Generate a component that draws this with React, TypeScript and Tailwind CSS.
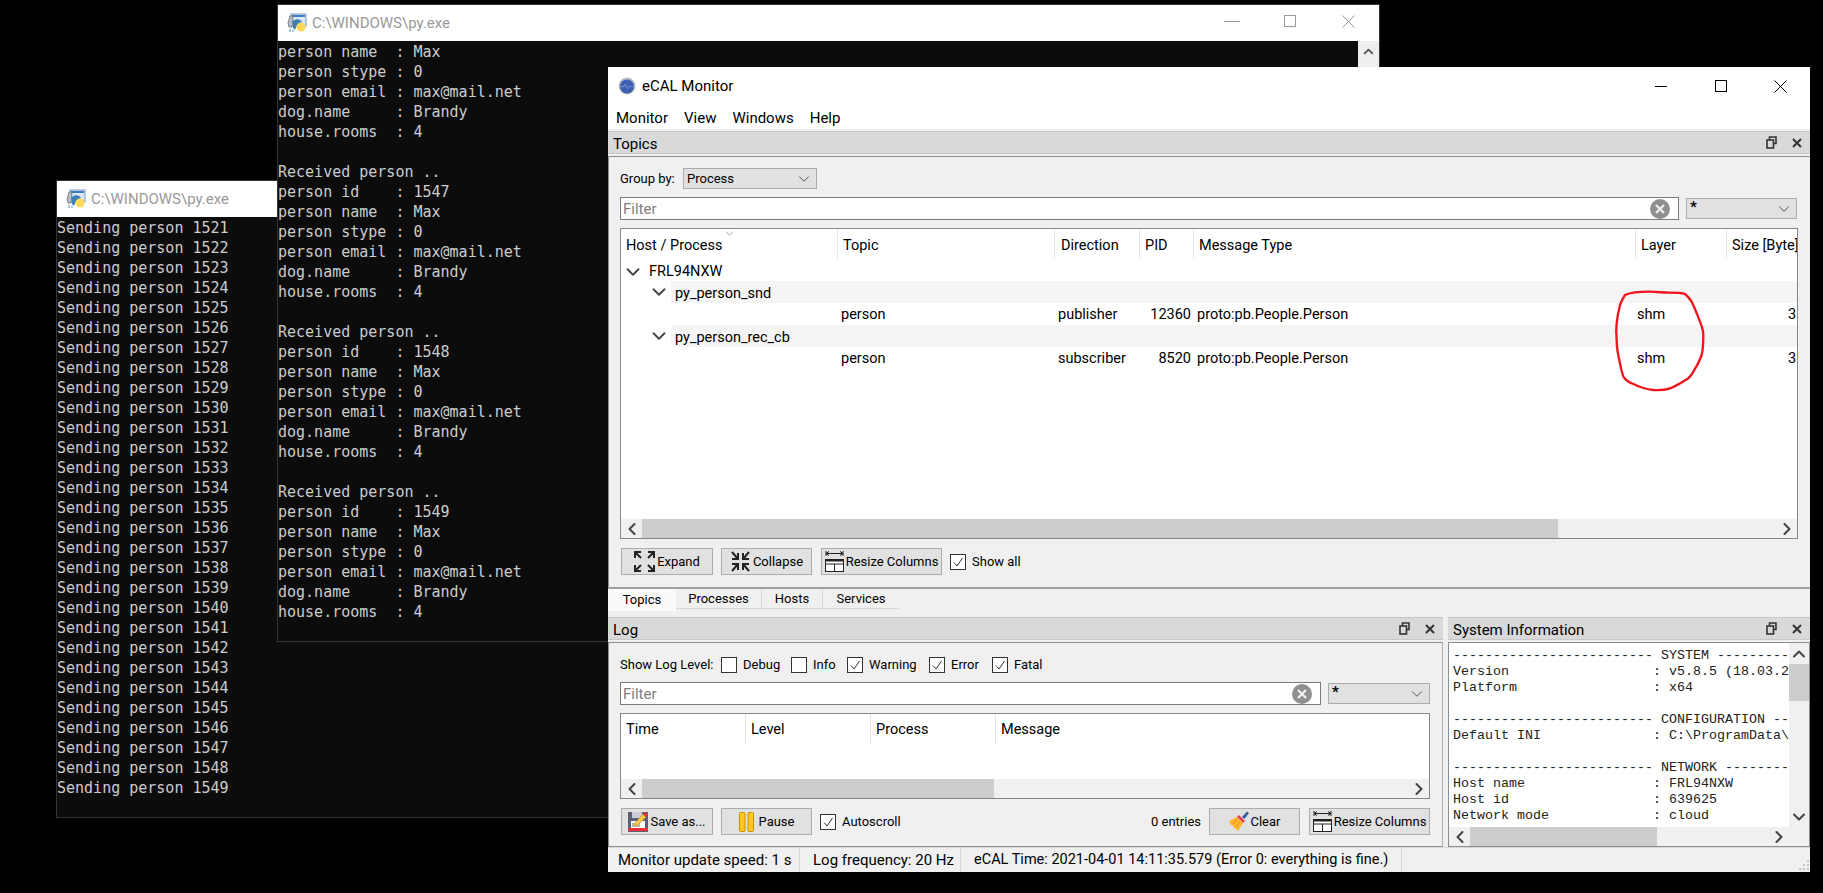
import { ChevronDown, ChevronLeft, ChevronRight, ChevronUp } from "lucide-react";
import type { ReactNode } from "react";

const received = (id: number) => [
    "Received person ..",
    `person id    : ${id}`,
    "person name  : Max",
    "person stype : 0",
    "person email : max@mail.net",
    "dog.name     : Brandy",
    "house.rooms  : 4",
    "",
];

const receiverLines = [...received(0).slice(2), ...received(1547), ...received(1548), ...received(1549).slice(0, 7)];
const senderLines = Array.from({ length: 29 }, (_, i) => `Sending person ${1521 + i}`);

const sysInfo = [
    "------------------------- SYSTEM ------------------",
    "Version                  : v5.8.5 (18.03.2021)",
    "Platform                 : x64",
    "",
    "------------------------- CONFIGURATION ------------",
    "Default INI              : C:\\ProgramData\\eCAL\\ecal.ini",
    "",
    "------------------------- NETWORK -----------------",
    "Host name                : FRL94NXW",
    "Host id                  : 639625",
    "Network mode             : cloud",
];

const PyIcon = () => (
    <svg width="20" height="20" viewBox="0 0 20 20" className="shrink-0">
        <rect x="4" y="1" width="15" height="12" fill="#dbe6f2" stroke="#7b98b8" />
        <rect x="5" y="2" width="13" height="2" fill="#3d7fc4" />
        <path d="M1 10 L3 3 L6 3 L5 14 L2 14 Z" fill="#b9c0c8" stroke="#5f6b78" strokeWidth="0.8" />
        <path d="M6 8 C9 5 14 6 15 9 L10 12 L8 17 L6 15 Z" fill="#3e7fb8" />
        <circle cx="14" cy="14" r="4.5" fill="#ffd95a" />
        <path d="M3 16 V19 M6 17 V19" stroke="#4a90d0" strokeWidth="1" />
    </svg>
);

const EcalIcon = () => (
    <svg width="18" height="18" viewBox="0 0 18 18" className="shrink-0">
        <circle cx="9" cy="9" r="8.5" fill="#b9bcc8" />
        <circle cx="9" cy="9.5" r="7" fill="#3d5fb0" />
        <path d="M2 9.5 H6 L7.5 7 L9.5 12 L11 9.5 H16" stroke="#7f9bdc" strokeWidth="0.8" fill="none" />
    </svg>
);

const DockButtons = () => (
    <div className="flex items-center gap-[15px] pr-[8px]">
        <svg width="11" height="13" viewBox="0 0 11 13">
            <path d="M3.5 3.5 V1 H10 V7.5 H7.5" fill="none" stroke="#333" strokeWidth="1.6" />
            <rect x="1" y="4" width="6.5" height="8" fill="none" stroke="#333" strokeWidth="1.6" />
        </svg>
        <svg width="10" height="10" viewBox="0 0 10 10">
            <path d="M1 1 L9 9 M9 1 L1 9" stroke="#333" strokeWidth="2" />
        </svg>
    </div>
);

const DockHeader = ({ title }: { title: string }) => (
    <div className="h-[23px] bg-[#d9d9d9] border-y border-[#c8c8c8] flex items-center justify-between pl-[5px] shrink-0 text-[15px]">
        <span className="pt-[2px]">{title}</span>
        <DockButtons />
    </div>
);

const Check = ({ on, label, className }: { on?: boolean; label: string; className?: string }) => (
    <div className={`flex items-center gap-[6px] text-[13px] ${className ?? ""}`}>
        <div className="w-[16px] h-[16px] border border-[#333] bg-white flex items-center justify-center shrink-0">
            {on && (
                <svg width="12" height="12" viewBox="0 0 12 12">
                    <path d="M2 6.5 L5 10 L10.5 2" fill="none" stroke="#333" strokeWidth="1" />
                </svg>
            )}
        </div>
        <span className="whitespace-nowrap">{label}</span>
    </div>
);

const Btn = ({ icon, label, className }: { icon: ReactNode; label: string; className: string }) => (
    <button className={`h-[27px] bg-[#e1e1e1] border border-[#adadad] flex items-center justify-center gap-[2px] text-[13px] whitespace-nowrap shrink-0 ${className}`}>
        {icon}
        <span>{label}</span>
    </button>
);

const ExpandIcon = () => (
    <svg width="21" height="21" viewBox="0 0 21 21" className="shrink-0">
        <path d="M1 7 V1 H7 M1 1 L7 7 M14 1 H20 V7 M20 1 L14 7 M1 14 V20 H7 M1 20 L7 14 M14 20 H20 V14 M20 20 L14 14" fill="none" stroke="#222" strokeWidth="2" />
    </svg>
);

const CollapseIcon = () => (
    <svg width="21" height="21" viewBox="0 0 21 21" className="shrink-0">
        <path d="M2 1 L8 8 M8 2 V8 H2 M19 1 L13 8 M13 2 V8 H19 M2 20 L8 13 M8 19 V13 H2 M19 20 L13 13 M13 19 V13 H19" fill="none" stroke="#222" strokeWidth="2" />
    </svg>
);

const ResizeIcon = () => (
    <svg width="19" height="21" viewBox="0 0 19 21" className="shrink-0">
        <path d="M1 0 V5 M18 0 V5 M1 2.5 H18 M1 2.5 L4 0.5 M1 2.5 L4 4.5 M18 2.5 L15 0.5 M18 2.5 L15 4.5" fill="none" stroke="#222" strokeWidth="1" />
        <rect x="0.5" y="8.5" width="18" height="12" fill="#fff" stroke="#222" />
        <path d="M0.5 13 H18.5 M9.5 13 V20.5" stroke="#222" />
        <rect x="0.5" y="8.5" width="18" height="2" fill="#222" />
    </svg>
);

const SaveIcon = () => (
    <svg width="20" height="21" viewBox="0 0 20 21" className="shrink-0">
        <rect x="0" y="1" width="20" height="20" fill="#5a5f75" />
        <rect x="4" y="1" width="10" height="6" fill="#c9ccd6" />
        <rect x="3" y="10" width="14" height="9" fill="#fff" />
        <rect x="0" y="17" width="20" height="3" fill="#e8303a" />
        <path d="M4 13 H12 M4 15 H12" stroke="#777" />
        <path d="M7 12 L15 3 L18 6 L10 14 L6 15 Z" fill="#f7c843" stroke="#b8860b" strokeWidth="0.5" />
        <path d="M15 3 L17 1 L20 4 L18 6 Z" fill="#e8303a" />
    </svg>
);

const PauseIcon = () => (
    <svg width="15" height="20" viewBox="0 0 15 20" className="shrink-0">
        <rect x="0.5" y="0.5" width="5.5" height="19" rx="1" fill="#ffc81e" stroke="#c89000" />
        <rect x="9" y="0.5" width="5.5" height="19" rx="1" fill="#ffc81e" stroke="#c89000" />
    </svg>
);

const BroomIcon = () => (
    <svg width="20" height="21" viewBox="0 0 20 21" className="shrink-0">
        <path d="M13 6 L18 0.5 L20 2 L15.5 8 Z" fill="#2f5f9e" />
        <path d="M10 4 L16 10 L14 12 L8 6 Z" fill="#e5405a" />
        <path d="M8 6 L14 12 L9 20 L6 17 L6 18 L3 14 L2 14 L0 10 Z" fill="#fdb52e" />
        <path d="M8 8 L4 13 M11 11 L7 16" stroke="#f08a1a" />
    </svg>
);

const Scrollbar = ({ thumb }: { thumb: string }) => (
    <div className="h-[19px] bg-[#f0f0f0] flex shrink-0">
        <div className="w-[21px] flex items-center justify-center">
            <ChevronLeft size={20} strokeWidth={2.5} color="#444" className="shrink-0" />
        </div>
        <div className={`bg-[#cdcdcd] ${thumb}`} />
        <div className="flex-1" />
        <div className="w-[21px] flex items-center justify-center">
            <ChevronRight size={20} strokeWidth={2.5} color="#444" className="shrink-0" />
        </div>
    </div>
);

const ClearIcon = () => (
    <div className="w-[20px] h-[20px] rounded-full bg-[#8f8f8f] flex items-center justify-center shrink-0">
        <svg width="10" height="10" viewBox="0 0 10 10">
            <path d="M1 1 L9 9 M9 1 L1 9" stroke="#eee" strokeWidth="2.4" />
        </svg>
    </div>
);

const FilterRow = ({ filter, combo }: { filter: string; combo: string }) => (
    <div className="flex items-center gap-[7px] text-[15px]">
        <div className={`h-[23px] bg-white border border-[#7a7a7a] flex items-center justify-between pl-[2px] pr-[8px] text-[#808080] ${filter}`}>
            <span>Filter</span>
            <ClearIcon />
        </div>
        <div className={`h-[21px] bg-[#e1e1e1] border border-[#adadad] flex justify-between pl-[3px] pr-[3px] ${combo}`}>
            <span className="font-bold leading-[16px]">*</span>
            <ChevronDown size={18} strokeWidth={1} color="#222" className="self-center shrink-0" />
        </div>
    </div>
);

const Expander = () => (
    <div className="w-[15px] h-[15px] flex items-center justify-center shrink-0">
        <ChevronDown size={22} strokeWidth={2} color="#444" className="shrink-0" />
    </div>
);

const topicRows = [
    { topic: "person", direction: "publisher", pid: "12360" },
    { topic: "person", direction: "subscriber", pid: "8520" },
];

const Console = ({ className, lines }: { className: string; lines: string[] }) => (
    <div className={`absolute bg-[#0c0c0c] border border-[#333] flex flex-col ${className}`}>
        <div className="h-[36px] bg-white flex items-center gap-[5px] pl-[9px] shrink-0 text-[#999999] text-[15px]">
            <PyIcon />
            <span>C:\WINDOWS\py.exe</span>
        </div>
        <div className="pt-[1px] text-[#cccccc] text-[15px] leading-[20px] whitespace-pre font-['DejaVu_Sans_Mono',monospace]">
            {lines.map((line, i) => (
                <div key={i} className="h-[20px]">{line}</div>
            ))}
        </div>
    </div>
);

export default function App() {
    return (
        <div className="relative w-full h-screen bg-black overflow-hidden text-black text-[14.5px] leading-[20px] font-['Roboto',sans-serif]">
            <Console className="left-[56px] top-[180px] w-[600px] h-[638px]" lines={senderLines} />

            <Console className="left-[277px] top-[4px] w-[1103px] h-[638px]" lines={receiverLines} />
            <div className="absolute left-[1358px] top-[41px] w-[21px] h-[26px] bg-[#eeeeee] flex justify-center pt-[3px]">
                <ChevronUp size={15} strokeWidth={3} color="#555" />
            </div>
            <div className="absolute left-[1224px] top-[21px] w-[16px] h-[1px] bg-[#999]" />
            <div className="absolute left-[1284px] top-[15px] w-[12px] h-[12px] border border-[#999]" />
            <svg className="absolute left-[1342px] top-[15px]" width="13" height="13" viewBox="0 0 13 13">
                <path d="M0.5 0.5 L12.5 12.5 M12.5 0.5 L0.5 12.5" stroke="#999" />
            </svg>

            <div className="absolute left-[608px] top-[67px] w-[1202px] h-[805px] bg-[#f0f0f0] flex flex-col">
                <div className="h-[38px] bg-white flex items-center justify-between pl-[10px] shrink-0">
                    <div className="flex items-center gap-[6px] text-[15px]">
                        <EcalIcon />
                        <span>eCAL Monitor</span>
                    </div>
                    <div className="flex items-center">
                        <div className="w-[12px] h-[1px] bg-black mr-[48px]" />
                        <div className="w-[12px] h-[12px] border border-black mr-[47px]" />
                        <svg width="13" height="13" viewBox="0 0 13 13" className="mr-[23px]">
                            <path d="M0.5 0.5 L12.5 12.5 M12.5 0.5 L0.5 12.5" stroke="#000" />
                        </svg>
                    </div>
                </div>
                <div className="h-[24px] bg-white flex items-center gap-[16px] pl-[8px] pt-[2px] shrink-0 text-[15px]">
                    <span>Monitor</span>
                    <span>View</span>
                    <span>Windows</span>
                    <span>Help</span>
                </div>
                <div className="h-[2px] shrink-0" />

                <DockHeader title="Topics" />
                <div className="h-[2px] shrink-0" />
                <div className="flex-1 border-t border-l border-[#8a8f94] pl-[11px] pr-[12px] flex flex-col min-h-0">
                    <div className="flex items-center mt-[11px] h-[21px] text-[13px]">
                        <span className="w-[63px] shrink-0">Group by:</span>
                        <div className="w-[134px] h-[21px] bg-[#e1e1e1] border border-[#adadad] flex items-center justify-between pl-[3px] pr-[3px]">
                            <span>Process</span>
                            <ChevronDown size={18} strokeWidth={1} color="#222" className="shrink-0" />
                        </div>
                    </div>
                    <div className="mt-[8px]">
                        <FilterRow filter="w-[1059px]" combo="w-[111px]" />
                    </div>

                    <div className="relative mt-[8px] h-[311px] w-[1178px] bg-white border border-[#828790] flex flex-col overflow-hidden shrink-0">
                        <ChevronDown size={13} strokeWidth={1} color="#555" className="absolute left-[102px] top-[-2px]" />
                        <div className="h-[30px] flex shrink-0">
                            <div className="w-[217px] pl-[5px] pt-[7px] border-r border-[#e5e5e5] shrink-0">Host / Process</div>
                            <div className="w-[217px] pl-[5px] pt-[7px] border-r border-[#e5e5e5] shrink-0">Topic</div>
                            <div className="w-[85px] pl-[6px] pt-[7px] border-r border-[#e5e5e5] shrink-0">Direction</div>
                            <div className="w-[54px] pl-[5px] pt-[7px] border-r border-[#e5e5e5] shrink-0">PID</div>
                            <div className="w-[442px] pl-[5px] pt-[7px] border-r border-[#e5e5e5] shrink-0">Message Type</div>
                            <div className="w-[91px] pl-[5px] pt-[7px] border-r border-[#e5e5e5] shrink-0">Layer</div>
                            <div className="pl-[5px] pt-[7px] whitespace-nowrap">Size [Byte]</div>
                        </div>
                        <div className="flex-1 min-h-0">
                            <div className="h-[22px] flex items-center pl-[4px] gap-[9px] pt-[3px]">
                                <Expander />
                                <span>FRL94NXW</span>
                            </div>
                            {topicRows.map((row, i) => (
                                <div key={row.pid}>
                                    <div className="h-[22px] flex items-center pl-[30px]">
                                        <Expander />
                                        <div className="flex-1 h-full bg-[#f5f5f5] flex items-center ml-[5px] pl-[4px] pt-[3px]">
                                            {i === 0 ? "py_person_snd" : "py_person_rec_cb"}
                                        </div>
                                    </div>
                                    <div className="h-[22px] flex items-center pt-[1px]">
                                        <div className="w-[220px] shrink-0" />
                                        <div className="w-[217px] shrink-0">{row.topic}</div>
                                        <div className="w-[87px] shrink-0">{row.direction}</div>
                                        <div className="w-[46px] text-right shrink-0">{row.pid}</div>
                                        <div className="w-[446px] pl-[6px] shrink-0">proto:pb.People.Person</div>
                                        <div className="w-[151px] shrink-0">shm</div>
                                        <span>3</span>
                                    </div>
                                </div>
                            ))}
                        </div>
                        <Scrollbar thumb="w-[916px]" />
                    </div>

                    <div className="mt-[9px] flex items-center">
                        <Btn icon={<ExpandIcon />} label="Expand" className="w-[92px] ml-[1px]" />
                        <Btn icon={<CollapseIcon />} label="Collapse" className="w-[91px] ml-[8px]" />
                        <Btn icon={<ResizeIcon />} label="Resize Columns" className="w-[121px] ml-[9px]" />
                        <Check on label="Show all" className="ml-[8px]" />
                    </div>
                </div>

                <div className="h-[30px] border-t-2 border-[#a0a0a0] flex text-[13px] shrink-0">
                    <div className="w-[68px] h-[22px] pb-[1px] bg-[#fafafa] flex items-center justify-center">Topics</div>
                    <div className="w-[86px] h-[20px] border-b border-r border-[#d8d8d8] flex items-center justify-center">Processes</div>
                    <div className="w-[61px] h-[20px] border-b border-r border-[#d8d8d8] flex items-center justify-center">Hosts</div>
                    <div className="w-[76px] h-[20px] border-b border-[#d8d8d8] flex items-center justify-center">Services</div>
                </div>

                <div className="h-[230px] flex gap-[5px] shrink-0">
                    <div className="w-[835px] flex flex-col">
                        <DockHeader title="Log" />
                        <div className="h-[2px] shrink-0" />
                        <div className="flex-1 border border-[#8a8f94] border-r-[#b0b0b0] pl-[11px] pr-[12px] flex flex-col min-h-0">
                            <div className="h-[16px] mt-[14px] flex items-center text-[13px]">
                                <span className="w-[101px] shrink-0">Show Log Level:</span>
                                <Check label="Debug" className="w-[70px] shrink-0" />
                                <Check label="Info" className="w-[56px] shrink-0" />
                                <Check on label="Warning" className="w-[82px] shrink-0" />
                                <Check on label="Error" className="w-[63px] shrink-0" />
                                <Check on label="Fatal" />
                            </div>
                            <div className="mt-[9px]">
                                <FilterRow filter="w-[701px]" combo="w-[102px]" />
                            </div>
                            <div className="mt-[8px] h-[86px] w-[810px] bg-white border border-[#828790] flex flex-col overflow-hidden shrink-0">
                                <div className="h-[30px] flex shrink-0">
                                    <div className="w-[125px] pl-[5px] pt-[6px] border-r border-[#e5e5e5] shrink-0">Time</div>
                                    <div className="w-[125px] pl-[5px] pt-[6px] border-r border-[#e5e5e5] shrink-0">Level</div>
                                    <div className="w-[125px] pl-[5px] pt-[6px] border-r border-[#e5e5e5] shrink-0">Process</div>
                                    <div className="pl-[5px] pt-[6px]">Message</div>
                                </div>
                                <div className="flex-1" />
                                <Scrollbar thumb="w-[352px]" />
                            </div>
                            <div className="mt-[9px] flex items-center">
                                <Btn icon={<SaveIcon />} label="Save as..." className="w-[92px] ml-[1px]" />
                                <Btn icon={<PauseIcon />} label="Pause" className="w-[91px] ml-[8px] gap-[5px]" />
                                <Check on label="Autoscroll" className="ml-[8px]" />
                                <span className="ml-auto mr-[8px] text-[13px]">0 entries</span>
                                <Btn icon={<BroomIcon />} label="Clear" className="w-[91px]" />
                                <Btn icon={<ResizeIcon />} label="Resize Columns" className="w-[121px] ml-[9px]" />
                            </div>
                        </div>
                    </div>

                    <div className="flex-1 flex flex-col min-w-0">
                        <DockHeader title="System Information" />
                        <div className="h-[2px] shrink-0" />
                        <div className="flex-1 border border-[#8a8f94] flex flex-col min-h-0">
                            <div className="flex-1 flex min-h-0">
                                <div className="flex-1 bg-white overflow-hidden pl-[4px] pt-[5px] whitespace-pre text-[13.33px] leading-[16px] font-['Liberation_Mono',monospace] text-[#222]">
                                    {sysInfo.map((line, i) => (
                                        <div key={i} className="h-[16px]">{line}</div>
                                    ))}
                                </div>
                                <div className="w-[20px] flex flex-col items-center">
                                    <div className="h-[21px] flex items-center">
                                        <ChevronUp size={20} strokeWidth={2.5} color="#444" />
                                    </div>
                                    <div className="w-full h-[37px] bg-[#cdcdcd]" />
                                    <div className="flex-1" />
                                    <div className="h-[21px] flex items-center">
                                        <ChevronDown size={20} strokeWidth={2.5} color="#444" />
                                    </div>
                                </div>
                            </div>
                            <div className="mr-[20px]">
                                <Scrollbar thumb="w-[187px]" />
                            </div>
                        </div>
                    </div>
                </div>

                <div className="h-[25px] flex items-center shrink-0 text-[15px] border-t border-[#d8d8d8] whitespace-nowrap">
                    <div className="w-[192px] h-full pl-[10px] border-r border-[#d8d8d8] flex items-center shrink-0">Monitor update speed: 1 s</div>
                    <div className="w-[161px] h-full pl-[13px] border-r border-[#d8d8d8] flex items-center shrink-0">Log frequency: 20 Hz</div>
                    <div className="w-[441px] h-full pl-[13px] border-r border-[#d8d8d8] flex items-center shrink-0 text-[14.5px]">eCAL Time: 2021-04-01 14:11:35.579 (Error 0: everything is fine.)</div>
                    <svg width="12" height="12" viewBox="0 0 12 12" className="ml-auto self-end mb-[1px]">
                        <path d="M9 1h2v2H9zM5 5h2v2H5zM9 5h2v2H9zM1 9h2v2H1zM5 9h2v2H5zM9 9h2v2H9z" fill="#c4c4c4" />
                    </svg>
                </div>
            </div>

            <svg className="absolute left-[1590px] top-[280px]" width="130" height="130" viewBox="0 0 390 390" fill="none">
                <path d="M105 45 C120 38 150 35 180 35 C200 35 220 38 235 38 C255 38 275 38 285 42 C295 50 300 58 305 65 C315 85 322 105 330 125 C336 140 340 150 340 165 C340 185 340 205 335 225 C328 245 320 260 310 275 C305 285 300 290 295 295 C280 305 260 318 240 325 C225 330 205 331 190 330 C170 328 150 322 130 312 C118 308 105 298 100 290 C95 275 92 262 90 250 C84 225 80 205 80 180 C78 160 78 145 80 130 C82 110 86 90 90 75 C95 62 100 52 105 45 Z" stroke="#f0141e" strokeWidth="7" strokeLinejoin="round" />
            </svg>
        </div>
    );
}
